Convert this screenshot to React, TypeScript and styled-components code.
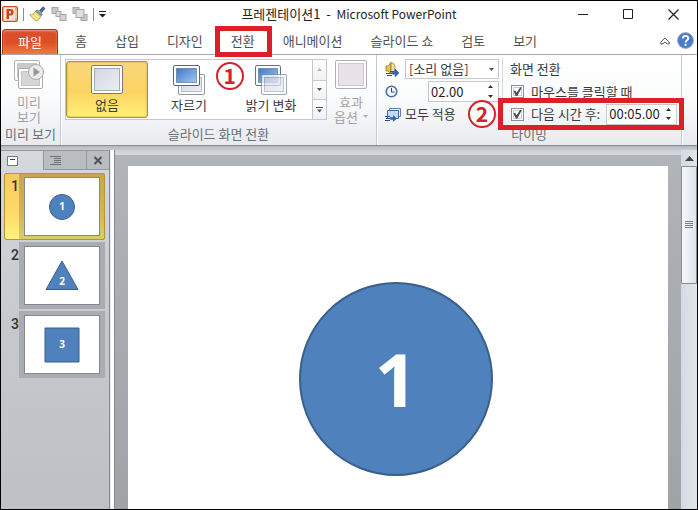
import React from 'react';
import styled, { createGlobalStyle, css } from 'styled-components';

const GlobalStyle = createGlobalStyle`
  * { box-sizing: border-box; }
  body { margin: 0; background: #fff; }
  body, button, input, select {
    font-family: "Noto Sans CJK KR", "Noto Sans", sans-serif;
    font-size: 13px;
    line-height: 16px;
    color: #3b3b3b;
  }
  button { padding: 0; border: 0; background: none; }
  svg { display: block; flex: none; }
`;

const AppWindow = styled.div`
  display: flex;
  flex-direction: column;
  height: 100vh;
  min-height: 400px;
  border: 1px solid #000;
  background: #fff;
  overflow: hidden;
`;

/* ---------- title bar ---------- */

const TitleBar = styled.header`
  display: grid;
  grid-template-columns: 1fr auto 1fr;
  align-items: center;
  height: 26px;
  flex: none;
`;

const QuickAccess = styled.div`
  display: flex;
  align-items: center;
  gap: 5px;
  padding-left: 1px;
`;

const Divider = styled.span`
  width: 1px;
  height: 13px;
  background: #8d8d8d;
`;

const WindowTitle = styled.h1`
  margin: 0;
  font-size: 13px;
  line-height: 18px;
  font-weight: 400;
  color: #222;
  white-space: nowrap;
`;

const ProductName = styled.span`
  font-size: 12px;
`;

const WindowButtons = styled.div`
  display: flex;
  justify-content: flex-end;
  gap: 34px;
  padding-right: 18px;
`;

/* ---------- tab strip ---------- */

const TabStrip = styled.nav`
  display: flex;
  align-items: stretch;
  height: 28px;
  flex: none;
  border-bottom: 1px solid #a3a7ad;
`;

const FileTab = styled.button`
  width: 56px;
  margin: 2px 3px 0 1px;
  border: 1px solid #a8321a;
  border-bottom: 0;
  border-radius: 4px 4px 0 0;
  background: linear-gradient(#d9502c, #dd4f25 50%, #f0793a);
  box-shadow: inset 0 1px 2px #f3a487;
  color: #fff;
`;

const Tab = styled.button`
  position: relative;
  padding: 0 14px;
  color: #505050;
  white-space: nowrap;
`;

const TabTools = styled.div`
  display: flex;
  align-items: center;
  gap: 7px;
  margin-left: auto;
  padding-right: 3px;
`;

/* ---------- annotations ---------- */

const Frame = styled.span<{ $inset: string }>`
  position: absolute;
  inset: ${(p) => p.$inset};
  border: 5px solid #dc1f2b;
  pointer-events: none;
  z-index: 2;
`;

const Badge = styled.span<{ $left: number; $top: number }>`
  position: absolute;
  left: ${(p) => p.$left}px;
  top: ${(p) => p.$top}px;
  z-index: 3;
  width: 28px;
  height: 28px;
  border: 2px solid #d3222b;
  border-radius: 50%;
  background: #fff;
  color: #d3222b;
  font: 700 21px/23px "Noto Sans CJK KR", sans-serif;
  text-align: center;
  pointer-events: none;
`;

/* ---------- ribbon ---------- */

const Ribbon = styled.section`
  display: flex;
  height: 91px;
  flex: none;
  border-bottom: 1px solid #898d93;
  background: linear-gradient(#fff, #fafbfc 50%, #e8eaee);
`;

const Group = styled.section`
  display: flex;
  flex-direction: column;
  justify-content: space-between;
  border-right: 1px solid #c6c9ce;
  box-shadow: 1px 0 0 #fff;
`;

const GroupBody = styled.div<{ $tight?: boolean }>`
  display: flex;
  padding: 4px ${(p) => (p.$tight ? 1 : 7)}px 0 4px;
`;

const GroupLabel = styled.h2`
  margin: 0 0 3px;
  font-size: 13px;
  line-height: 16px;
  font-weight: 400;
  color: #6b7078;
  text-align: center;
  white-space: nowrap;
`;

const BigButton = styled.button`
  display: flex;
  flex-direction: column;
  align-items: center;
  gap: 5px;
  width: 48px;
  padding-top: 1px;
  color: #a3a3a3;
  line-height: 15px;
`;

const WithArrow = styled.span`
  display: flex;
  align-items: center;
  gap: 5px;
`;

const Gallery = styled.div`
  display: flex;
  height: 61px;
  border: 1px solid #c5c8cc;
  background: #fff;
`;

const GalleryItem = styled.button<{ $selected?: boolean }>`
  display: flex;
  flex-direction: column;
  align-items: center;
  justify-content: space-between;
  width: 82px;
  height: 57px;
  margin-top: 1px;
  padding: 3px 0 4px;
  border: 1px solid transparent;
  border-radius: 3px;
  ${(p) =>
    p.$selected &&
    css`
      border-color: #b08f3a;
      background: linear-gradient(#f9d87c, #fdd462 55%, #fff07a);
      box-shadow: inset 0 0 2px #c79a35;
    `}
`;

const GalleryScroll = styled.div`
  display: grid;
  grid-template-rows: repeat(3, 1fr);
  width: 14px;
  border-left: 1px solid #c5c8cc;
`;

const ScrollButton = styled.button`
  display: grid;
  place-items: center;
  background: linear-gradient(#fff, #f0f1f3);
  & + & { border-top: 1px solid #c5c8cc; }
`;

const TimingBody = styled.div`
  position: relative;
  display: flex;
  padding: 3px 4px 0 8px;
`;

const Rows = styled.div<{ $left?: boolean }>`
  display: grid;
  grid-template-rows: 22px 23px 22px;
  align-items: center;
  ${(p) => (p.$left ? 'width: 113px;' : 'padding-left: 7px;')}
`;

const Row = styled.div<{ $spread?: boolean }>`
  display: flex;
  align-items: center;
  gap: 6px;
  white-space: nowrap;
  ${(p) => p.$spread && 'justify-content: space-between;'}
`;

const RowDivider = styled.span`
  width: 1px;
  height: 40px;
  margin-left: 4px;
  background: #d4d7db;
`;

const SelectBox = styled.div`
  display: grid;
  align-items: center;
  width: 94px;
  height: 20px;
  border: 1px solid #c5c8cc;
  background: #fff;
  & > * { grid-area: 1 / 1; }
  & > svg { justify-self: end; margin-right: 4px; pointer-events: none; }
`;

const Select = styled.select`
  appearance: none;
  width: 100%;
  height: 18px;
  padding: 0 3px;
  border: 0;
  background: none;
`;

const SpinBox = styled.div`
  display: flex;
  width: 71px;
  height: 21px;
  border: 1px solid #c5c8cc;
  background: #fff;
`;

const SpinInput = styled.input`
  width: 54px;
  min-width: 0;
  padding: 0 0 0 2px;
  border: 0;
  background: none;
  color: #1f1f1f;
`;

const SpinButtons = styled.div`
  display: grid;
  grid-template-rows: 1fr 1fr;
  width: 14px;
`;

const SpinButton = styled.button`
  display: grid;
  place-items: center;
`;

const CheckLabel = styled.label`
  display: flex;
  align-items: center;
  gap: 7px;
  padding-left: 1px;
  white-space: nowrap;
`;

const Check = styled.input`
  appearance: none;
  width: 13px;
  height: 13px;
  margin: 0;
  border: 1px solid #8f8f8f;
  background: #fff;
  display: grid;
  place-items: center;
  box-shadow: inset 0 0 0 1px #fff, inset 0 0 0 2px #c9ccd1;
  &:checked::before {
    content: "";
    width: 9px;
    height: 9px;
    background: #4b4b55;
    clip-path: polygon(5% 45%, 25% 40%, 40% 65%, 78% 5%, 98% 5%, 48% 100%, 32% 100%);
  }
`;

const ApplyButton = styled.button`
  display: flex;
  align-items: center;
  gap: 4px;
  white-space: nowrap;
`;

/* ---------- workspace ---------- */

const Workspace = styled.main`
  display: flex;
  flex: 1;
  min-height: 0;
  padding-top: 4px;
  background: linear-gradient(#b4b8bd, #d3d6db 6px);
`;

const SlidePanel = styled.aside`
  display: flex;
  flex-direction: column;
  width: 109px;
  flex: none;
  border-right: 1px solid #85898e;
  background: linear-gradient(#d5d8dd, #c5c8cc 50%, #bdc0c5);
`;

const PanelTabs = styled.div`
  display: grid;
  grid-template-columns: 42px 43px 1fr;
  height: 20px;
  flex: none;
`;

const PanelTab = styled.button<{ $active?: boolean }>`
  display: grid;
  align-items: center;
  justify-items: start;
  padding-left: 6px;
  border-top: 1px solid #94989d;
  ${(p) =>
    !p.$active &&
    css`
      border-left: 1px solid #94989d;
      border-bottom: 1px solid #94989d;
      background: #b9bcc1;
    `}
`;

const ThumbList = styled.ol`
  display: flex;
  flex-direction: column;
  gap: 2px;
  margin: 0;
  padding: 3px 4px 0 3px;
  list-style: none;
`;

const ThumbItem = styled.li<{ $selected?: boolean }>`
  display: grid;
  grid-template-columns: 15px 1fr;
  height: 67px;
  border-radius: 3px;
  ${(p) =>
    p.$selected &&
    css`
      background: linear-gradient(#f6c960, #ffda67 60%, #fff482);
      box-shadow: inset 0 0 0 1px #b79536;
    `}
`;

const ThumbNumber = styled.span`
  padding: 4px 0 0 7px;
  font: 500 14px/18px Roboto, sans-serif;
  color: #333;
`;

const ThumbFrame = styled.span<{ $selected?: boolean }>`
  display: grid;
  padding: 4px 5px;
  background: ${(p) =>
    p.$selected ? 'linear-gradient(#c9a54d, #d2b456 60%, #d8d06a)' : '#a9acb0'};
  ${(p) => p.$selected && 'border-radius: 0 3px 3px 0; box-shadow: inset -1px 0 #b79536, inset 0 1px #b79536, inset 0 -1px #b79536;'}
`;

const Thumb = styled.span`
  display: grid;
  place-items: center;
  border: 1px solid #85888b;
  background: #fff;
`;

const ThumbShape = styled.svg`
  font: 700 10px "Open Sans", sans-serif;
`;

const Splitter = styled.div`
  width: 5px;
  flex: none;
  border-left: 1px solid #e8eaec;
  border-right: 1px solid #85898e;
  background: #fff;
`;

const Editor = styled.section`
  display: flex;
  flex: 1;
  min-width: 0;
  margin-top: 5px;
  padding: 11px 13px 0 13px;
  background: linear-gradient(#b1b4b8, #a9adb1 40%, #a0a4a7);
`;

const Slide = styled.article`
  flex: 1;
  display: flex;
  justify-content: center;
  align-items: flex-start;
  padding: 116px 4px 0 0;
  background: #fff;
  overflow: hidden;
`;

const Disc = styled.div`
  display: grid;
  place-items: center;
  width: 194px;
  height: 194px;
  flex: none;
  border: 2px solid #3b5f8b;
  border-radius: 50%;
  background: #4f81bd;
  color: #fff;
  font: 700 74px/104px "Open Sans", sans-serif;
`;

const ScrollBar = styled.div`
  display: flex;
  flex-direction: column;
  width: 16px;
  flex: none;
  background: linear-gradient(90deg, #d3dae3, #e2e7ed);
`;

const ScrollArrow = styled.button`
  display: grid;
  place-items: center;
  height: 16px;
  flex: none;
`;

const ScrollThumb = styled.button`
  display: grid;
  place-items: center;
  height: 118px;
  border: 1px solid #868b94;
  border-radius: 1px;
  background: linear-gradient(90deg, #f5f7fa, #dfe3ec);
`;

/* ---------- icons ---------- */

const Triangle = ({ up, color = '#555', w = 5 }: { up?: boolean; color?: string; w?: number }) => (
  <svg width={w} height="3" viewBox="0 0 6 3" preserveAspectRatio="none">
    <path d={up ? 'M0 3 3 0 6 3z' : 'M0 0h6L3 3z'} fill={color} />
  </svg>
);

const AppIcon = () => (
  <svg width="16" height="16" viewBox="0 0 16 16">
    <rect x=".5" y=".5" width="15" height="15" rx="1.5" fill="#f0a27c" stroke="#c44d22" />
    <rect x="2" y="1.500" width="11" height="13" fill="#fbe3d3" />
    <path d="M13 4h2v8h-2z" fill="#f7c4a8" />
    <path d="M4.500 13V3h3.500c2.400 0 3.600 1.100 3.600 3.200S10.200 9.600 7.900 9.600H7V13zM7 5v2.600h.9c.8 0 1.200-.4 1.200-1.300S8.700 5 7.900 5z" fill="#c9441a" fillRule="evenodd" />
  </svg>
);

const BrushIcon = () => (
  <svg width="17" height="16" viewBox="0 0 17 16">
    <path d="M10.500 4.500 14 .8l2 1.700-3.200 4z" fill="#4a67a5" stroke="#2f4779" strokeWidth=".7" />
    <path d="M8 3.800 13.500 8.500 11.800 10 6.500 5.300z" fill="#8b97b3" stroke="#666" strokeWidth=".7" />
    <path d="M6.500 5.300 11.800 10C11 13 9 14.500 6.500 15L.8 8.800C3.500 8.500 5.500 7.500 6.500 5.300z" fill="#f1dd7c" stroke="#9c8740" strokeWidth=".7" />
    <path d="M3.500 9.500 7 13M6 8l3.500 4" stroke="#fff6bb" />
  </svg>
);

const LayersIcon = ({ front }: { front?: boolean }) => (
  <svg width="16" height="15" viewBox="0 0 15 15">
    <g fill="#c9c9c9" stroke="#a6a6a6">
      <rect x=".5" y=".5" width="6" height="6" />
      {front && <rect x="8.500" y="7.500" width="6" height="6" />}
      <rect x={front ? 3.5 : 4.5} y={front ? 2.5 : 4.5} width={front ? 8 : 5} height={front ? 8 : 5} fill="#dedede" />
      {!front && <rect x="8.500" y="7.500" width="6" height="6" fill="#d2d2d2" />}
    </g>
  </svg>
);

const Picture = ({ x = 0, y = 0, w = 31, h = 28, fill, stroke = '#77797d', opacity = 1 }: {
  x?: number; y?: number; w?: number; h?: number; fill: string; stroke?: string; opacity?: number;
}) => (
  <g opacity={opacity}>
    <rect x={x + 0.5} y={y + 0.5} width={w - 1} height={h - 1} rx="1.500" fill="#fff" stroke={stroke} />
    <rect x={x + 3.5} y={y + 3.5} width={w - 7} height={h - 7} fill={fill} stroke={stroke} strokeOpacity=".6" />
  </g>
);

const Gradients = () => (
  <defs>
    <linearGradient id="blue" x2="1" y2="1"><stop stopColor="#3c78cc" /><stop offset="1" stopColor="#a3c6f3" /></linearGradient>
    <linearGradient id="grey" x2="1" y2="1"><stop stopColor="#d3d6e2" /><stop offset="1" stopColor="#eceef5" /></linearGradient>
  </defs>
);

const NoneIcon = () => (
  <svg width="32" height="30" viewBox="0 0 32 30">
    <Gradients />
    <Picture w={32} h={29} fill="url(#grey)" />
  </svg>
);

const CutIcon = ({ fade }: { fade?: boolean }) => (
  <svg width="32" height="30" viewBox="0 0 32 30">
    <Gradients />
    {fade ? (
      <>
        <Picture w={26} h={21} fill="url(#blue)" stroke="#5e7593" />
        <Picture x={6} y={9} w={26} h={21} fill="url(#grey)" stroke="#7b8798" opacity={0.75} />
      </>
    ) : (
      <>
        <Picture x={5} y={9} w={27} h={21} fill="url(#grey)" stroke="#8d95a1" />
        <Picture w={27} h={21} fill="url(#blue)" stroke="#55677f" />
      </>
    )}
  </svg>
);

const EffectIcon = () => (
  <svg width="32" height="29" viewBox="0 0 32 29">
    <Picture w={32} h={29} fill="#e9e3e9" stroke="#b1aeb2" />
  </svg>
);

const PreviewIcon = () => (
  <svg width="31" height="29" viewBox="0 0 31 29">
    <Picture w={26} h={21} fill="#c9c9c9" stroke="#b2b2b2" />
    <Picture x={4} y={8} w={25} h={21} fill="#d6d6d6" stroke="#aaa" />
    <circle cx="22" cy="12" r="7.500" fill="#ececec" stroke="#aaa" />
    <path d="M19.500 7.500 26 12l-6.500 4.500z" fill="#979797" />
  </svg>
);

const SoundIcon = () => (
  <svg width="14" height="15" viewBox="0 0 14 15">
    <path d="M1 4h2l3-3.500v11L3 9H1z" fill="#e9c64f" stroke="#947729" strokeWidth=".8" />
    <path d="M6 .7c3 0 4 2.500 4 5s-1 5-4 5.500z" fill="#f6e49a" stroke="#947729" strokeWidth=".8" />
    <path d="M1 11.500h6M2 13.500h5M5 9.500h3" stroke="#2d4f96" />
    <path d="M7.500 9.300H10V7l4 4-4 3.800v-2.500H7.500z" fill="#3567bd" stroke="#24468b" strokeWidth=".5" />
  </svg>
);

const ClockIcon = () => (
  <svg width="13" height="13" viewBox="0 0 13 13">
    <circle cx="6.500" cy="6.500" r="5.300" fill="#f2f7ff" stroke="#496eaf" strokeWidth="1.600" />
    <path d="M6.500 3v4h3" fill="none" stroke="#444" />
  </svg>
);

const ApplyIcon = () => (
  <svg width="16" height="15" viewBox="0 0 16 15">
    <path d="M4.500 1.500h11v8h-11z" fill="#e6eefb" stroke="#5f7fae" />
    <path d="M2.500 3.500h11v8h-11z" fill="#c4d9f5" stroke="#466a9e" />
    <path d="M0 9.500h5M1 11.500h5M0 13.500h5" stroke="#2c4e91" />
    <path d="M5 10.200h3V8l4 3.500L8 15v-2.300H5z" fill="#3567bd" />
  </svg>
);

const UpDown = ({ label }: { label: string }) => (
  <SpinButtons>
    <SpinButton type="button" aria-label={`${label} +`}><Triangle up color="#333" /></SpinButton>
    <SpinButton type="button" aria-label={`${label} -`}><Triangle color="#333" /></SpinButton>
  </SpinButtons>
);

const shapes: Record<number, React.ReactNode> = {
  1: <circle cx="18" cy="18" r="12.500" />,
  2: <path d="M18 3 34 31.500H2z" />,
  3: <path d="M1 1h34v34H1z" />,
};

const SlideShape = ({ n }: { n: number }) => (
  <ThumbShape width="36" height="36" viewBox="0 0 36 36">
    <g fill="#4f81bd" stroke="#3b5f8b">{shapes[n]}</g>
    <text x="18" y={n === 2 ? 27 : 21} fill="#fff" textAnchor="middle">{n}</text>
  </ThumbShape>
);

const tabs = ['홈', '삽입', '디자인', '전환', '애니메이션', '슬라이드 쇼', '검토', '보기'];

export default function App() {
  return (
    <AppWindow>
      <GlobalStyle />
      <TitleBar>
        <QuickAccess>
          <AppIcon />
          <Divider />
          <BrushIcon />
          <LayersIcon />
          <LayersIcon front />
          <Divider />
          <svg width="7" height="7" viewBox="0 0 7 7"><path d="M0 .5h7" stroke="#222" /><path d="M0 3h7L3.500 6.500z" fill="#222" /></svg>
        </QuickAccess>
        <WindowTitle>프레젠테이션1&nbsp; -&nbsp; <ProductName>Microsoft PowerPoint</ProductName></WindowTitle>
        <WindowButtons>
          <button type="button" aria-label="최소화">
            <svg width="11" height="11" viewBox="0 0 11 11"><path d="M0 5.500h10" stroke="#222" /></svg>
          </button>
          <button type="button" aria-label="최대화">
            <svg width="11" height="11" viewBox="0 0 11 11"><path d="M.5.5h9v9h-9z" fill="none" stroke="#222" /></svg>
          </button>
          <button type="button" aria-label="닫기">
            <svg width="11" height="11" viewBox="0 0 11 11"><path d="M.5.5l10 10M10.500.5l-10 10" stroke="#222" strokeWidth="1.200" /></svg>
          </button>
        </WindowButtons>
      </TitleBar>

      <TabStrip>
        <FileTab type="button">파일</FileTab>
        {tabs.map((name) => (
          <Tab key={name} type="button">
            {name}
            {name === '전환' && (
              <>
                <Frame $inset="-1px -3px -3px -2px" />
                <Badge $left={-1} $top={35}>1</Badge>
              </>
            )}
          </Tab>
        ))}
        <TabTools>
          <button type="button" aria-label="리본 최소화">
            <svg width="10" height="8" viewBox="0 0 10 8"><path d="M5 1 .8 5v1.800h2L5 5l2.200 1.800h2V5z" fill="#fff" stroke="#444" strokeWidth=".9" /></svg>
          </button>
          <button type="button" aria-label="도움말">
            <svg width="17" height="17" viewBox="0 0 17 17">
              <circle cx="8.500" cy="8.500" r="7.800" fill="#4b7cc9" stroke="#7895c2" />
              <path d="M5.800 6.600C5.800 3 11.300 3 11.300 6.300c0 2-2.700 2-2.700 4.200" fill="none" stroke="#fff" strokeWidth="1.900" />
              <path d="M7.600 11.800h2v2h-2z" fill="#fff" />
            </svg>
          </button>
        </TabTools>
      </TabStrip>

      <Ribbon>
        <Group>
          <GroupBody>
            <BigButton type="button">
              <PreviewIcon />
              <span>미리<br />보기</span>
            </BigButton>
          </GroupBody>
          <GroupLabel>미리 보기</GroupLabel>
        </Group>

        <Group>
          <GroupBody $tight>
            <Gallery>
              <GalleryItem type="button" $selected><NoneIcon />없음</GalleryItem>
              <GalleryItem type="button"><CutIcon />자르기</GalleryItem>
              <GalleryItem type="button"><CutIcon fade />밝기 변화</GalleryItem>
              <GalleryScroll>
                <ScrollButton type="button" aria-label="위로"><Triangle up color="#b4b4b4" /></ScrollButton>
                <ScrollButton type="button" aria-label="아래로"><Triangle /></ScrollButton>
                <ScrollButton type="button" aria-label="자세히">
                  <svg width="7" height="6" viewBox="0 0 7 6"><path d="M0 .5h7" stroke="#555" /><path d="M1 2.500h5L3.500 5.500z" fill="#555" /></svg>
                </ScrollButton>
              </GalleryScroll>
            </Gallery>
            <BigButton type="button">
              <EffectIcon />
              <span>효과<WithArrow>옵션<Triangle color="#b4b4b4" /></WithArrow></span>
            </BigButton>
          </GroupBody>
          <GroupLabel>슬라이드 화면 전환</GroupLabel>
        </Group>

        <Group>
          <TimingBody>
            <Rows $left>
              <Row>
                <SoundIcon />
                <SelectBox>
                  <Select aria-label="소리"><option>[소리 없음]</option></Select>
                  <Triangle />
                </SelectBox>
              </Row>
              <Row $spread>
                <ClockIcon />
                <SpinBox>
                  <SpinInput aria-label="기간" defaultValue="02.00" />
                  <UpDown label="기간" />
                </SpinBox>
              </Row>
              <ApplyButton type="button"><ApplyIcon />모두 적용</ApplyButton>
            </Rows>
            <RowDivider />
            <Rows>
              <span>화면 전환</span>
              <CheckLabel><Check type="checkbox" defaultChecked />마우스를 클릭할 때</CheckLabel>
              <Row>
                <CheckLabel><Check type="checkbox" defaultChecked />다음 시간 후:</CheckLabel>
                <SpinBox>
                  <SpinInput aria-label="다음 시간 후" defaultValue="00:05.00" />
                  <UpDown label="다음 시간 후" />
                </SpinBox>
              </Row>
            </Rows>
            <Frame $inset="43px -3px -5px 121px" />
            <Badge $left={91} $top={45}>2</Badge>
          </TimingBody>
          <GroupLabel>타이밍</GroupLabel>
        </Group>
      </Ribbon>

      <Workspace>
        <SlidePanel>
          <PanelTabs>
            <PanelTab type="button" $active aria-label="슬라이드">
              <svg width="11" height="10" viewBox="0 0 11 10"><path d="M.5.5h10v9H.5z" fill="#fff" stroke="#777" /><path d="M3 3.500h5" stroke="#444" /></svg>
            </PanelTab>
            <PanelTab type="button" aria-label="개요">
              <svg width="12" height="9" viewBox="0 0 12 9"><path d="M0 .5h11M4 2.500h7M4 4.500h7M4 6.500h7M0 8.500h11" stroke="#6d6f72" /></svg>
            </PanelTab>
            <PanelTab type="button" aria-label="닫기">
              <svg width="10" height="9" viewBox="0 0 10 9"><path d="M1.500 1l7 7M8.500 1l-7 7" stroke="#505256" strokeWidth="2" /></svg>
            </PanelTab>
          </PanelTabs>
          <ThumbList>
            {[1, 2, 3].map((n) => (
              <ThumbItem key={n} $selected={n === 1}>
                <ThumbNumber>{n}</ThumbNumber>
                <ThumbFrame $selected={n === 1}>
                  <Thumb><SlideShape n={n} /></Thumb>
                </ThumbFrame>
              </ThumbItem>
            ))}
          </ThumbList>
        </SlidePanel>
        <Splitter />
        <Editor>
          <Slide><Disc>1</Disc></Slide>
        </Editor>
        <ScrollBar>
          <ScrollArrow type="button" aria-label="위로 스크롤">
            <svg width="9" height="5" viewBox="0 0 9 5"><path d="M0 5 4.500 0 9 5z" fill="#444" /></svg>
          </ScrollArrow>
          <ScrollThumb type="button" aria-label="스크롤 위치">
            <svg width="8" height="8" viewBox="0 0 8 8"><path d="M0 .5h8M0 2.500h8M0 4.500h8M0 6.500h8" stroke="#777c85" /></svg>
          </ScrollThumb>
        </ScrollBar>
      </Workspace>
    </AppWindow>
  );
}
